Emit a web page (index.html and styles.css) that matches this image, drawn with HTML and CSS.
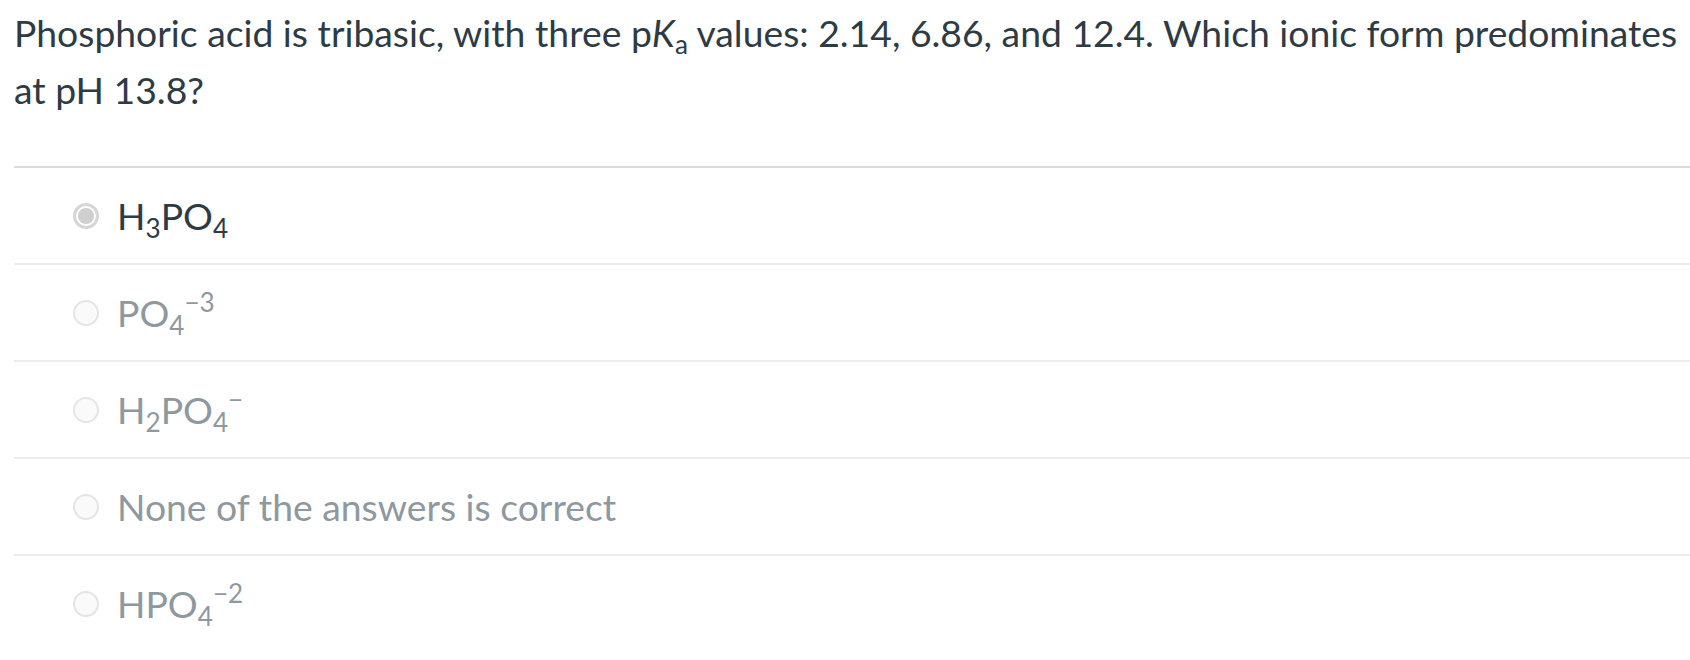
FILE: index.html
```html
<!DOCTYPE html>
<html>
<head>
<meta charset="utf-8">
<link rel="stylesheet" href="styles.css">
</head>
<body>
<div class="question">
  <div class="question-text">Phosphoric acid is tribasic, with three p<i>K</i><sub class="ka">a</sub> values: 2.14, 6.86, and 12.4. Which ionic form predominates at pH 13.8?</div>
  <div class="answers">
    <div class="answer selected">
      <span class="radio"></span>
      <span class="label">H<sub>3</sub>PO<sub>4</sub></span>
    </div>
    <div class="answer">
      <span class="radio"></span>
      <span class="label">PO<sub>4</sub><sup>−3</sup></span>
    </div>
    <div class="answer">
      <span class="radio"></span>
      <span class="label">H<sub>2</sub>PO<sub>4</sub><sup>−</sup></span>
    </div>
    <div class="answer">
      <span class="radio"></span>
      <span class="label">None of the answers is correct</span>
    </div>
    <div class="answer">
      <span class="radio"></span>
      <span class="label">HPO<sub>4</sub><sup>−2</sup></span>
    </div>
  </div>
</div>
</body>
</html>
```
FILE: styles.css
```css
html, body {
  margin: 0;
  padding: 0;
  background: #ffffff;
}
body {
  font-family: Lato, "Liberation Sans", sans-serif;
  color: #2d3b45;
}
.question {
  padding-left: 14px;
}
.question-text {
  font-size: 37.3px;
  line-height: 57px;
  padding-top: 4px;
  height: 166px;
  box-sizing: border-box;
}
.question-text i {
  font-style: italic;
}
.question-text .ka {
  font-size: 0.7em;
  vertical-align: -0.28em;
  line-height: 0;
}
.answers {
  display: flex;
  flex-direction: column;
}
.answer {
  display: flex;
  align-items: center;
  height: 95px;
  border-top: 2px solid #ebeced;
  color: #8e989f;
  font-size: 37.3px;
}
.answer:first-child {
  border-top-color: #dcdddf;
}
.answer.selected {
  color: #2d3b45;
}
.radio {
  width: 22px;
  height: 22px;
  border-radius: 50%;
  border: 2px solid #e4e5e6;
  background: #fafafa;
  margin-left: 59px;
  margin-right: 18px;
  flex: none;
  box-sizing: content-box;
  position: relative;
}
.answer.selected .radio {
  border: 3px solid #d6d6d6;
  background: #ffffff;
  width: 20px;
  height: 20px;
}
.answer.selected .radio::after {
  content: "";
  position: absolute;
  left: 2px;
  top: 2px;
  width: 16px;
  height: 16px;
  border-radius: 50%;
  background: #cfcfcf;
}
.label {
  line-height: 40px;
  white-space: nowrap;
}
.label sub {
  font-size: 0.7em;
  vertical-align: -0.32em;
  line-height: 0;
}
.label sup {
  font-size: 0.7em;
  vertical-align: 0.58em;
  line-height: 0;
}
```
